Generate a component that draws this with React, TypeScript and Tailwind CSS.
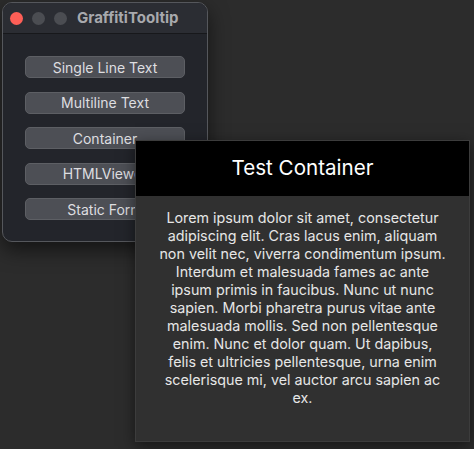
const buttons = ["Single Line Text", "Multiline Text", "Container", "HTMLViewer", "Static Form"];

const lines = [
  "Lorem ipsum dolor sit amet, consectetur",
  "adipiscing elit. Cras lacus enim, aliquam",
  "non velit nec, viverra condimentum ipsum.",
  "Interdum et malesuada fames ac ante",
  "ipsum primis in faucibus. Nunc ut nunc",
  "sapien. Morbi pharetra purus vitae ante",
  "malesuada mollis. Sed non pellentesque",
  "enim. Nunc et dolor quam. Ut dapibus,",
  "felis et ultricies pellentesque, urna enim",
  "scelerisque mi, vel auctor arcu sapien ac",
  "ex.",
];

const font = { fontFamily: '"Inter", "Liberation Sans", sans-serif' };

export default function App() {
  return (
    <div className="relative h-[449px] w-[474px] overflow-hidden bg-[#2c2c2c]" style={font}>
      {/* main window */}
      <div className="absolute left-[2px] top-[2px] flex h-[240px] w-[206px] flex-col overflow-hidden rounded-[10px] border border-[#55575c] bg-[#23252b] shadow-[0_8px_20px_rgba(0,0,0,0.55)]">
        <div className="flex h-[31px] items-center border-b border-[#17181b] bg-[#2b2d33] pl-[7px]">
          <div className="flex gap-[9px]">
            <span className="h-[13px] w-[13px] rounded-full bg-[#fe5f57]" />
            <span className="h-[13px] w-[13px] rounded-full bg-[#4b4d52]" />
            <span className="h-[13px] w-[13px] rounded-full bg-[#4b4d52]" />
          </div>
          <span className="ml-[10px] text-[15px] font-bold text-[#a8a9ad]">GraffitiTooltip</span>
        </div>
        <div className="flex flex-col gap-[13.5px] pl-[22px] pt-[22px]">
          {buttons.map((b) => (
            <div
              key={b}
              className="flex h-[22px] w-[160px] items-center justify-center rounded-[5px] border border-[#5d5f64] bg-[#4d4f55] text-[14px] text-[#dedee0]"
            >
              {b}
            </div>
          ))}
        </div>
      </div>

      {/* tooltip container */}
      <div className="absolute left-[135px] top-[140px] flex h-[302px] w-[335px] flex-col border border-[#3c3c3c] bg-[#303030] shadow-[0_4px_14px_rgba(0,0,0,0.5)]">
        <div className="flex h-[55px] items-center justify-center bg-black text-[20.6px] text-white">
          Test Container
        </div>
        <div className="flex flex-col items-center pt-[13px] text-[14.3px] leading-[18px] text-[#e6e6e6]">
          {lines.map((l) => (
            <span key={l} className="whitespace-nowrap">
              {l}
            </span>
          ))}
        </div>
      </div>
    </div>
  );
}
